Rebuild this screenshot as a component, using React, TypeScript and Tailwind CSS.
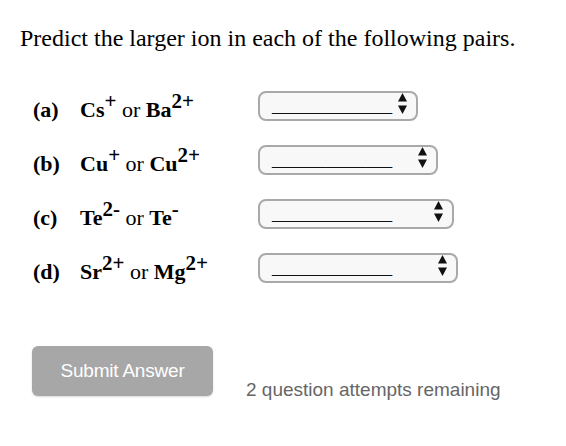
import React from 'react'

type Part = { t: string; sup?: string; bold?: boolean }

const rows: { label: string; parts: Part[]; width: string }[] = [
  {
    label: '(a)',
    parts: [{ t: 'Cs', sup: '+', bold: true }, { t: ' or ' }, { t: 'Ba', sup: '2+', bold: true }],
    width: 'w-[160px]',
  },
  {
    label: '(b)',
    parts: [{ t: 'Cu', sup: '+', bold: true }, { t: ' or ' }, { t: 'Cu', sup: '2+', bold: true }],
    width: 'w-[180px]',
  },
  {
    label: '(c)',
    parts: [{ t: 'Te', sup: '2-', bold: true }, { t: ' or ' }, { t: 'Te', sup: '-', bold: true }],
    width: 'w-[196px]',
  },
  {
    label: '(d)',
    parts: [{ t: 'Sr', sup: '2+', bold: true }, { t: ' or ' }, { t: 'Mg', sup: '2+', bold: true }],
    width: 'w-[200px]',
  },
]

function Arrows() {
  return (
    <svg width="9" height="21" viewBox="0 0 9 21" aria-hidden>
      <path d="M4.5 0 L9 8.5 L0 8.5 Z" fill="#111" />
      <path d="M0 12.5 L9 12.5 L4.5 21 Z" fill="#111" />
    </svg>
  )
}

function FakeSelect({ width }: { width: string }) {
  return (
    <div
      className={`${width} h-[30px] shrink-0 flex justify-between items-start pl-[12px] pr-[9px] border-2 border-[#a9a9a9] rounded-[8px] bg-[#f8f8f8]`}
    >
      <span className="block leading-[20px] text-[24px] font-bold text-[#111] font-['Liberation_Sans',Arial,sans-serif]">
        _________
      </span>
      <Arrows />
    </div>
  )
}

export default function App() {
  return (
    <div className="w-[566px] h-[446px] bg-white overflow-hidden font-['Liberation_Serif','Times_New_Roman',serif] text-black">
      <p className="pt-[24px] pl-[20px] text-[24px] leading-[28px]">
        Predict the larger ion in each of the following pairs.
      </p>

      <div className="mt-[39px] flex flex-col gap-[24px] pl-[33px]">
        {rows.map((r) => (
          <div key={r.label} className="flex items-start h-[30px]">
            <div className="w-[225px] shrink-0 mt-[6px] text-[22px] leading-[26px] whitespace-pre">
              <span className="inline-block w-[47px] font-bold">{r.label}</span>
              {r.parts.map((p, i) => (
                <span key={i} className={p.bold ? 'font-bold' : ''}>
                  {p.t}
                  {p.sup && (
                    <span className="relative -top-[9px] text-[21px]">{p.sup}</span>
                  )}
                </span>
              ))}
            </div>
            <FakeSelect width={r.width} />
          </div>
        ))}
      </div>

      <div className="mt-[63px] pl-[32px] flex items-start gap-[33px] font-['Liberation_Sans',Arial,sans-serif]">
        <button className="w-[181px] h-[50px] rounded-[6px] bg-[#a7a7a7] text-white text-[19px] tracking-[-0.2px] shadow-[0_1px_2px_rgba(0,0,0,0.15)]">
          Submit Answer
        </button>
        <span className="mt-[33px] text-[19px] leading-[22px] text-[#666]">2 question attempts remaining</span>
      </div>
    </div>
  )
}
